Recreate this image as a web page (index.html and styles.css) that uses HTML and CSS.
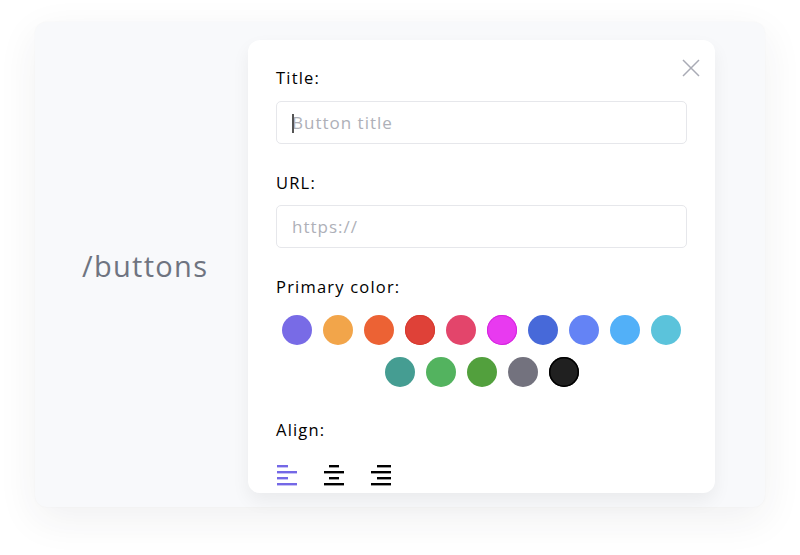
FILE: index.html
```html
<!DOCTYPE html>
<html lang="en">
<head>
<meta charset="utf-8">
<title>Buttons</title>
<link rel="stylesheet" href="styles.css">
</head>
<body>
<div class="card">
  <div class="command">/buttons</div>
  <div class="modal">
    <svg class="close" width="18" height="18" viewBox="0 0 18 18"><path d="M1 1L17 17M17 1L1 17" stroke="#a9abb5" stroke-width="1.5" fill="none"/></svg>
    <div class="label">Title:</div>
    <div class="input"><span class="caret"></span><span class="ph">Button title</span></div>
    <div class="label gap">URL:</div>
    <div class="input"><span class="ph">https://</span></div>
    <div class="label gap">Primary color:</div>
    <div class="swatches">
      <span class="dot c1"></span><span class="dot c2"></span><span class="dot c3"></span><span class="dot c4"></span><span class="dot c5"></span>
      <span class="dot c6"></span><span class="dot c7"></span><span class="dot c8"></span><span class="dot c9"></span><span class="dot c10"></span>
      <span class="dot c11"></span><span class="dot c12"></span><span class="dot c13"></span><span class="dot c14"></span><span class="dot c15"></span>
    </div>
    <div class="label align-label">Align:</div>
    <div class="aligns">
      <svg class="al active" width="22" height="22" viewBox="0 0 22 22"><rect x="1" y="0" width="11" height="2.4"/><rect x="1" y="6" width="20" height="2.4"/><rect x="1" y="12" width="11" height="2.4"/><rect x="1" y="18" width="20" height="2.4"/></svg>
      <svg class="al" width="22" height="22" viewBox="0 0 22 22"><rect x="6" y="0" width="10" height="2.4"/><rect x="1" y="6" width="20" height="2.4"/><rect x="6" y="12" width="10" height="2.4"/><rect x="1" y="18" width="20" height="2.4"/></svg>
      <svg class="al" width="22" height="22" viewBox="0 0 22 22"><rect x="7" y="0" width="14" height="2.4"/><rect x="1" y="6" width="20" height="2.4"/><rect x="7" y="12" width="14" height="2.4"/><rect x="1" y="18" width="20" height="2.4"/></svg>
    </div>
  </div>
</div>
</body>
</html>
```
FILE: styles.css
```css
* { box-sizing: border-box; }
html, body { margin: 0; padding: 0; background: #ffffff; }
body {
  width: 800px;
  height: 555px;
  overflow: hidden;
  font-family: "Open Sans", "Liberation Sans", sans-serif;
  padding: 22px 35px 0 35px;
}
.card {
  width: 730px;
  height: 485px;
  background: #f8f9fb;
  border-radius: 12px;
  box-shadow: 0 12px 40px rgba(40, 40, 60, 0.07), 0 0 2px rgba(0,0,0,0.04);
  display: grid;
  grid-template-columns: 213px 467px;
  align-items: start;
}
.command {
  align-self: center;
  padding-left: 47px;
  font-size: 29px;
  color: #6f7480;
  letter-spacing: 1.3px;
  margin-top: 1px;
}
.modal {
  position: relative;
  margin-top: 18px;
  height: 453px;
  background: #ffffff;
  border-radius: 12px;
  box-shadow: 0 8px 18px rgba(0, 0, 0, 0.06);
  padding: 28px 28px 0 28px;
}
.close {
  position: absolute;
  top: 19px;
  right: 15px;
}
.label {
  font-size: 16.5px;
  font-weight: 500;
  line-height: 20px;
  color: #000;
  letter-spacing: 1.2px;
  margin-bottom: 13px;
}
.label.gap { margin-top: 29px; margin-bottom: 12px; }
.input {
  height: 43px;
  border: 1px solid #e6e7eb;
  border-radius: 5px;
  display: flex;
  align-items: center;
  padding-left: 15px;
  position: relative;
}
.ph {
  font-size: 17px;
  color: #aeb0b8;
  letter-spacing: 1px;
}
.caret {
  position: absolute;
  left: 15px;
  top: 12px;
  width: 1.5px;
  height: 19px;
  background: #555;
}
.swatches {
  display: flex;
  flex-wrap: wrap;
  justify-content: center;
  margin-top: 12px;
  width: 411px;
}
.dot {
  width: 30px;
  height: 30px;
  border-radius: 50%;
  margin: 6px 5.5px;
}
.c1 { background: #786be6; }
.c2 { background: #f2a54a; }
.c3 { background: #ec6234; }
.c4 { background: #df4138; box-shadow: inset 0 0 0 1px #d63a2e; }
.c5 { background: #e3456b; }
.c6 { background: #e83af0; box-shadow: inset 0 0 0 1px #d424de; }
.c7 { background: #4769d9; }
.c8 { background: #6483f5; }
.c9 { background: #52b0f8; }
.c10 { background: #5bc3db; }
.c11 { background: #459d92; }
.c12 { background: #53b35f; }
.c13 { background: #52a03d; }
.c14 { background: #73727e; }
.c15 { background: #202020; box-shadow: inset 0 0 0 1.5px #000; }
.align-label { margin-top: 27px; margin-bottom: 25px; }
.aligns {
  display: flex;
  gap: 25px;
  padding-left: 0;
}
.al { fill: #000; display: block; }
.al.active { fill: #7468e6; }
```
